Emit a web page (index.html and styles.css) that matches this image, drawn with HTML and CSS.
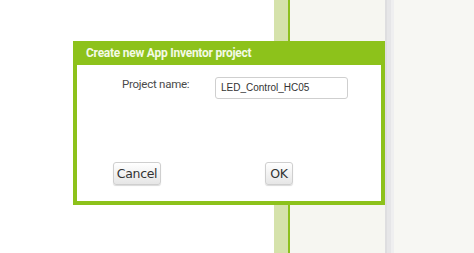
FILE: index.html
```html
<!DOCTYPE html>
<html>
<head>
<meta charset="utf-8">
<link rel="stylesheet" href="styles.css">
</head>
<body>
<div class="page">
  <div class="blank"></div>
  <div class="strip-green"></div>
  <div class="line-green"></div>
  <div class="panel"></div>
  <div class="strip-gray"></div>
  <div class="panel-right"></div>
</div>
<div class="dialog">
  <div class="dialog-title">Create new App Inventor project</div>
  <div class="dialog-body">
    <div class="field-row">
      <label class="field-label">Project name:</label>
      <div class="field-input">LED_Control_HC05</div>
    </div>
    <div class="buttons">
      <button class="btn btn-cancel">Cancel</button>
      <button class="btn btn-ok">OK</button>
    </div>
  </div>
</div>
</body>
</html>
```
FILE: styles.css
```css
html, body {
  margin: 0;
  padding: 0;
  height: 100%;
}
body {
  font-family: Roboto, "Liberation Sans", sans-serif;
  overflow: hidden;
}
.page {
  display: flex;
  height: 253px;
}
.blank { width: 274px; background: #ffffff; }
.strip-green { width: 14px; background: #d5e2ab; }
.line-green { width: 2px; background: #8cc01d; }
.panel { width: 95px; background: #f6f6f1; }
.strip-gray { width: 9px; background: #e6e6e8; box-shadow: inset 2px 0 0 #dedee0, inset -3px 0 0 #efeff0; }
.panel-right { flex: 1; background: #f7f7f3; }

.dialog {
  position: absolute;
  left: 73px;
  top: 41px;
  width: 312px;
  height: 164px;
  box-sizing: border-box;
  background: #8dc21b;
  padding: 0 4px 4px 4px;
  display: flex;
  flex-direction: column;
}
.dialog-title {
  height: 24px;
  line-height: 24px;
  padding-left: 9px;
  color: #f4fae6;
  font-weight: bold;
  font-size: 12px;
  letter-spacing: -0.25px;
}
.dialog-body {
  flex: 1;
  background: #ffffff;
  display: flex;
  flex-direction: column;
  justify-content: space-between;
  padding: 12px 0 16px 0;
}
.field-row {
  display: flex;
  align-items: flex-start;
}
.field-label {
  margin-left: 45px;
  width: 93px;
  font-size: 11.5px;
  letter-spacing: -0.25px;
  color: #4a4a4a;
  line-height: 12px;
  padding-top: 1px;
}
.field-input {
  width: 133px;
  height: 22px;
  box-sizing: border-box;
  border: 1px solid #cfcfcf;
  border-radius: 3px;
  font-family: "Liberation Sans", sans-serif;
  font-size: 10px;
  line-height: 20px;
  padding-left: 5px;
  color: #333;
}
.buttons {
  display: flex;
  align-items: center;
}
.btn {
  height: 23px;
  box-sizing: border-box;
  border: 1px solid #cfcfcf;
  border-radius: 3px;
  background: linear-gradient(#ffffff, #e6e6e6);
  box-shadow: 0 1px 1px rgba(0,0,0,0.15);
  font-family: "DejaVu Sans", sans-serif;
  font-size: 12.5px;
  letter-spacing: -0.3px;
  color: #333;
  padding: 0;
}
.btn-cancel { margin-left: 36px; width: 48px; }
.btn-ok { margin-left: 104px; width: 28px; }
```
